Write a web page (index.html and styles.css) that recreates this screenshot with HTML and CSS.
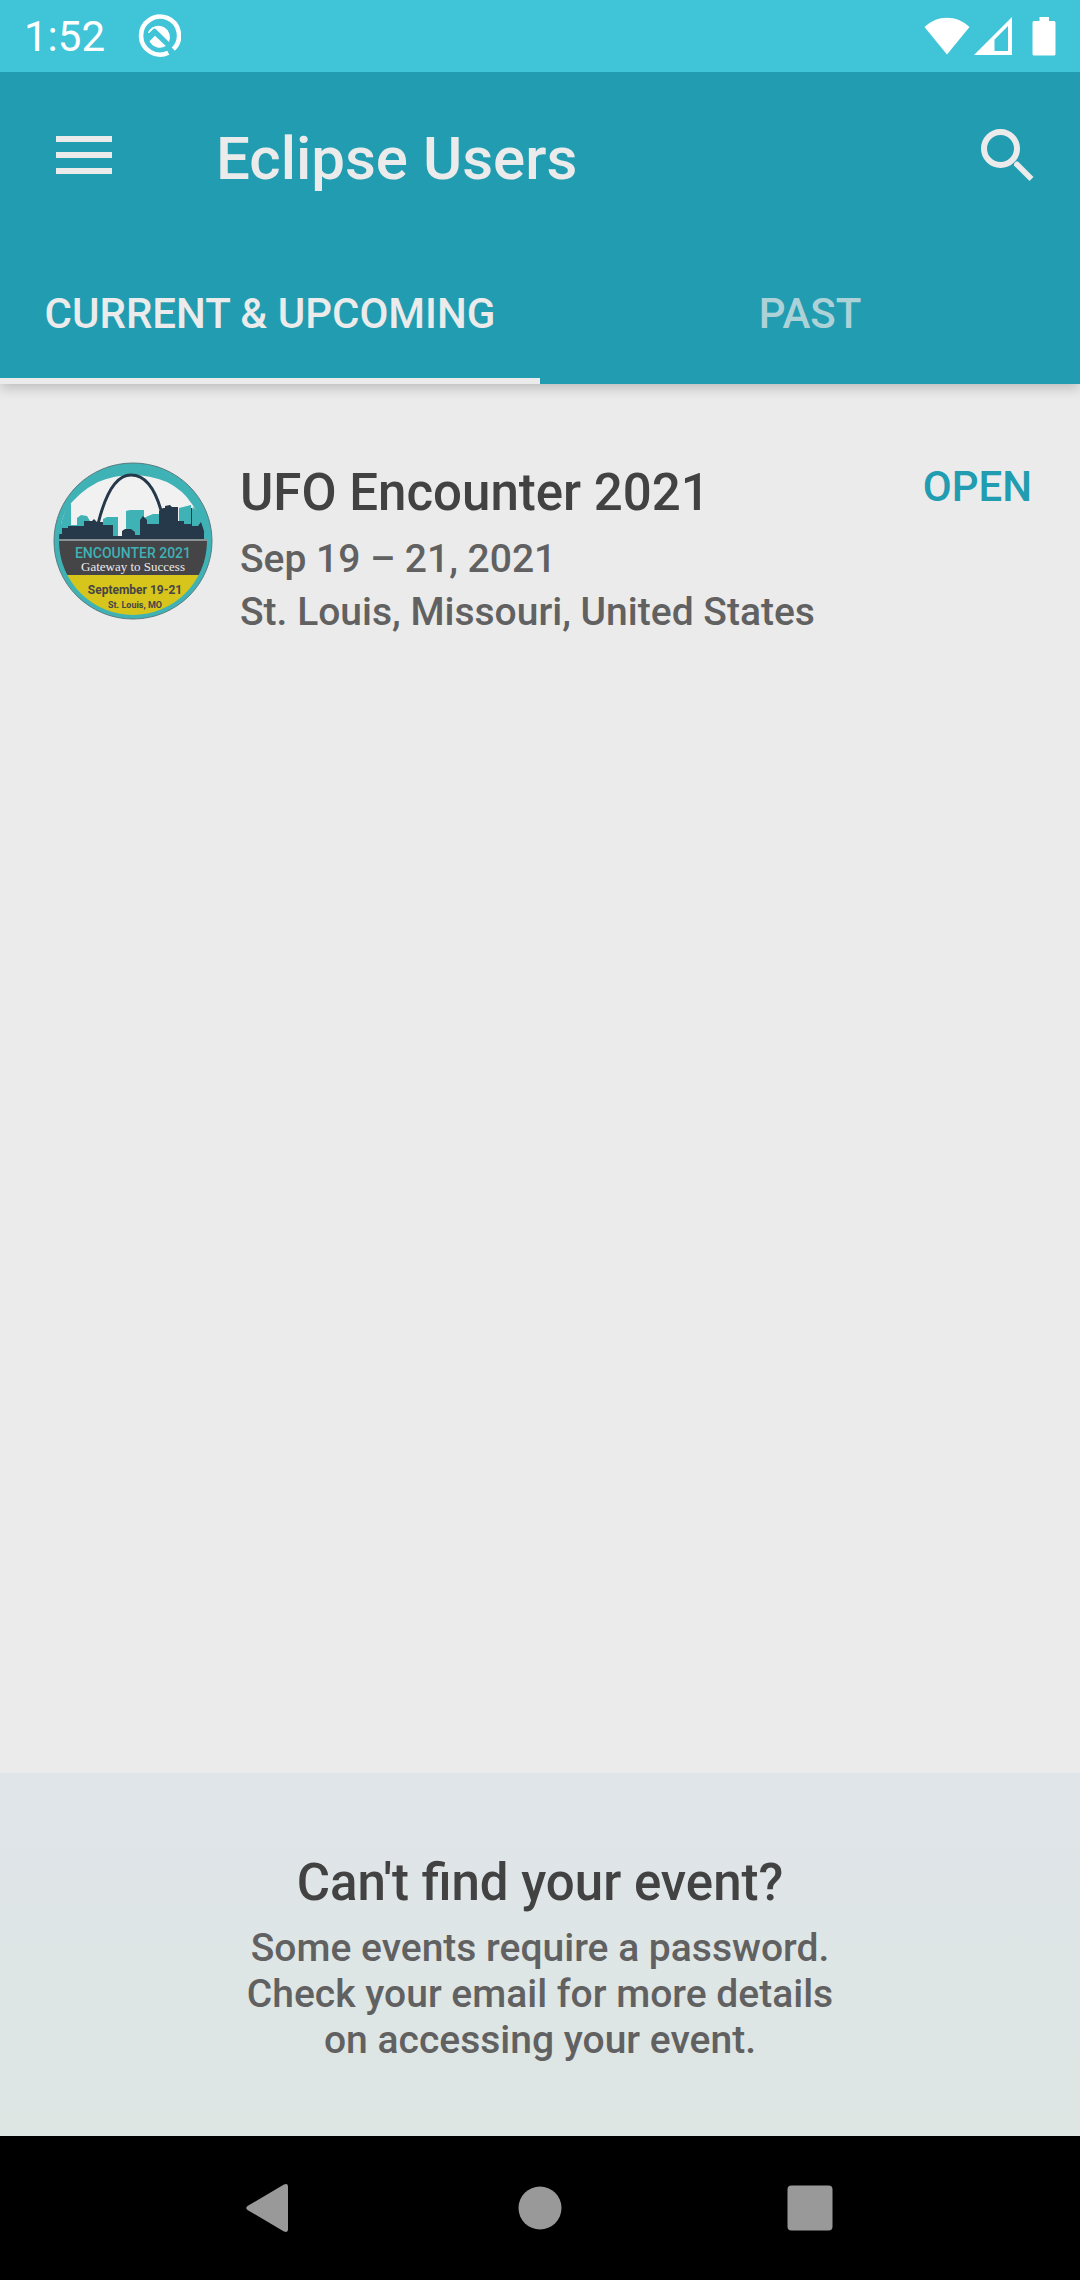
FILE: index.html
```html
<!DOCTYPE html>
<html lang="en">
<head>
    <meta charset="UTF-8">
    <meta name="viewport" content="width=device-width, initial-scale=1.0">
    <title>Eclipse Users</title>
    <link rel="stylesheet" href="styles.css">
</head>
<body>
    <div class="status-bar">
        <span class="clock">1:52</span>
        <svg class="status-app" width="44" height="44" viewBox="0 0 44 44">
            <path d="M36.3 35.2A19 19 0 1 0 31.3 38.7" fill="none" stroke="#fff" stroke-width="4.6"/>
            <path d="M12 16.5A11.6 11.6 0 0 1 32 28L19 15.2Q17.500 14 16 15.200L12.500 18.700Q11 19.500 11 18.700Z" fill="#fff"/>
            <path d="M12.500 27.200L18 21.700L28.800 32A11.600 11.600 0 0 1 12.500 27.200Z" fill="#fff"/>
        </svg>
        <div class="status-icons">
            <svg width="46" height="40" viewBox="0 0 46 40">
                <path d="M23 38.500L0.500 11C13 -1.500 33 -1.500 45.500 11Z" fill="#fff"/>
            </svg>
            <svg class="signal" width="38" height="40" viewBox="0 0 38 40">
                <path fill-rule="evenodd" d="M38 1V39H0ZM34 10L20.500 23.500V35H34Z" fill="#fff"/>
            </svg>
            <svg class="battery" width="24" height="40" viewBox="0 0 24 40">
                <path d="M7.500 1H17V5H22Q23.500 5 23.500 6.500V38Q23.500 39.500 22 39.500H2Q0.500 39.500 0.500 38V6.500Q0.500 5 2 5H7.500Z" fill="#fff"/>
            </svg>
        </div>
    </div>

    <header class="app-header">
        <div class="toolbar">
            <button class="icon-btn" type="button" aria-label="Menu">
                <svg width="56" height="38" viewBox="0 0 56 38">
                    <path d="M0 0H56V6H0ZM0 16H56V22H0ZM0 32H56V38H0Z" fill="#ebebeb"/>
                </svg>
            </button>
            <h1>Eclipse Users</h1>
            <button class="icon-btn" type="button" aria-label="Search">
                <svg width="54" height="54" viewBox="0 0 54 54">
                    <circle cx="20.500" cy="20.500" r="16.500" fill="none" stroke="#ebebeb" stroke-width="6"/>
                    <path d="M34 37.500V35.500L36 33.500H38L53.500 49L49.500 53Z" fill="#ebebeb"/>
                </svg>
            </button>
        </div>
        <nav class="tabs">
            <button class="tab active" type="button">CURRENT &amp; UPCOMING</button>
            <button class="tab" type="button">PAST</button>
        </nav>
    </header>

    <main>
        <article class="event">
            <svg class="event-logo" width="160" height="160" viewBox="0 0 160 160" role="img" aria-label="Encounter 2021 logo">
                <defs>
                    <clipPath id="inner"><circle cx="80" cy="79" r="74"/></clipPath>
                </defs>
                <ellipse cx="80" cy="79" rx="79" ry="78" fill="#3fb2b5" stroke="#587b80" stroke-width="1"/>
                <g clip-path="url(#inner)">
                    <!-- sky -->
                    <path d="M8 78V58Q18 34 45 20Q79 6 114 20Q130 28 139 42L152 62V78Z" fill="#f1f1f1"/>
                    <!-- far buildings -->
                    <path d="M5 78V47L18 42V63H24V56L28 53L34 54L37 59L43 60H50V57L54 55H65V78ZM73 78V49L77 48H91V56L95 54L100 52H107V78ZM126 78V46L138 43V50L140 45L152 56V78Z" fill="#3fb2b5"/>
                    <!-- near buildings -->
                    <path d="M6 78V72H9V66H15V64H31V59H39L41 57L44 60H50V63H60V74H69V69L72 67H78L82 70V73H87V58L90 54L94 58V62H106V49L110 46H112V44L117 43L119 45H125V59H131V62H138V46H139V64H145L148 60L151 69V78Z" fill="#26394a"/>
                    <path d="M45 62Q57 13 78 13Q100 13 110 56" fill="none" stroke="#26394a" stroke-width="3"/>
                    <path d="M0 78H160V113H0Z" fill="#454447"/>
                    <path d="M0 77H160V79H0Z" fill="#8b9294"/>
                    <path d="M0 113H160V160H0Z" fill="#d7c51c"/>
                </g>
                <text class="logo-name" x="80" y="96">ENCOUNTER 2021</text>
                <text class="logo-tagline" x="80" y="109">Gateway to Success</text>
                <text class="logo-date" x="82" y="132">September 19-21</text>
                <text class="logo-place" x="82" y="146">St. Louis, MO</text>
            </svg>
            <div class="event-info">
                <h2>UFO Encounter 2021</h2>
                <p>Sep 19 – 21, 2021</p>
                <p>St. Louis, Missouri, United States</p>
            </div>
            <button class="open-btn" type="button">OPEN</button>
        </article>
    </main>

    <section class="help">
        <h2>Can't find your event?</h2>
        <p>Some events require a password.<br>Check your email for more details<br>on accessing your event.</p>
    </section>

    <nav class="system-nav">
        <button type="button" aria-label="Back">
            <svg width="48" height="48" viewBox="0 0 48 48">
                <path d="M1.500 22Q-1 24 1.500 26L38 47.500Q42 49 42 45.500V2.500Q42 -1 38 0.500Z" fill="#999"/>
            </svg>
        </button>
        <button type="button" aria-label="Home">
            <svg width="48" height="48" viewBox="0 0 48 48">
                <circle cx="24" cy="24" r="21.500" fill="#999"/>
            </svg>
        </button>
        <button type="button" aria-label="Recent apps">
            <svg width="48" height="48" viewBox="0 0 48 48">
                <rect x="1.500" y="1.500" width="45" height="45" rx="4" fill="#999"/>
            </svg>
        </button>
    </nav>
</body>
</html>
```
FILE: styles.css
```css
* {
    box-sizing: border-box;
}
body {
    margin: 0;
    min-height: 100vh;
    display: flex;
    flex-direction: column;
    font-family: Roboto, sans-serif;
    font-weight: 500;
    background: #ebebeb;
    color: #424242;
}
h1, h2, p {
    margin: 0;
    font-weight: 500;
}
button {
    padding: 0;
    border: none;
    background: none;
    font-family: inherit;
    font-weight: 500;
    cursor: pointer;
}
svg {
    display: block;
}

/* status bar */
.status-bar {
    display: flex;
    align-items: center;
    height: 72px;
    padding: 0 24px;
    background: #40c4d8;
    color: white;
}
.clock {
    font-size: 42px;
    font-weight: 400;
    line-height: 48px;
    padding-top: 2px;
}
.status-app {
    margin-left: 32px;
}
.status-icons {
    display: flex;
    margin-left: auto;
}
.signal {
    margin-left: 4px;
}
.battery {
    margin-left: 20px;
}

/* header */
.app-header {
    background: #229cb0;
    color: #ebebeb;
    box-shadow: 0 4px 12px rgba(0, 0, 0, 0.2);
    clip-path: inset(0 0 -16px 0);
}
.toolbar {
    display: flex;
    align-items: center;
    height: 168px;
    padding: 0 46px 2px 56px;
}
.toolbar h1 {
    flex: 1;
    margin-left: 104px;
    font-size: 60px;
    line-height: 72px;
    padding-top: 8px;
}
.tabs {
    display: flex;
}
.tab {
    flex: 1;
    height: 144px;
    padding-top: 8px;
    border-bottom: 6px solid transparent;
    font-size: 42px;
    color: rgba(235, 235, 235, 0.7);
}
.tab.active {
    color: #ebebeb;
    border-bottom-color: #ebebeb;
}

/* event list */
main {
    flex: 1;
}
.event {
    display: flex;
    align-items: flex-start;
    padding: 78px 48px 48px 53px;
}
.event-info {
    flex: 1;
    margin-left: 27px;
    padding-top: 1px;
}
h2 {
    font-size: 51px;
    line-height: 60px;
}
p {
    font-size: 39px;
    color: #616161;
}
.event-info h2 {
    margin-bottom: 10px;
}
.event-info p {
    line-height: 53px;
}
.open-btn {
    padding-top: 1px;
    font-size: 42px;
    line-height: 48px;
    color: #229cb0;
}
.logo-name, .logo-tagline, .logo-date, .logo-place {
    text-anchor: middle;
    font-family: Roboto, sans-serif;
    font-weight: 500;
}
.logo-name {
    font-size: 14px;
    fill: #3fb2b5;
}
.logo-tagline {
    font-family: "Liberation Serif", serif;
    font-size: 13px;
    fill: #ebebeb;
}
.logo-date {
    font-size: 12px;
    font-weight: 700;
    fill: #454447;
}
.logo-place {
    font-size: 9px;
    font-weight: 700;
    fill: #454447;
}

/* help box */
.help {
    padding: 80px 48px 73px;
    text-align: center;
    background: linear-gradient(#e0e5e9, #dde6e3);
}
.help h2 {
    margin-bottom: 12px;
}
.help p {
    line-height: 46px;
}

/* navigation buttons */
.system-nav {
    display: flex;
    justify-content: center;
    gap: 222px;
    height: 144px;
    background: black;
}
```
